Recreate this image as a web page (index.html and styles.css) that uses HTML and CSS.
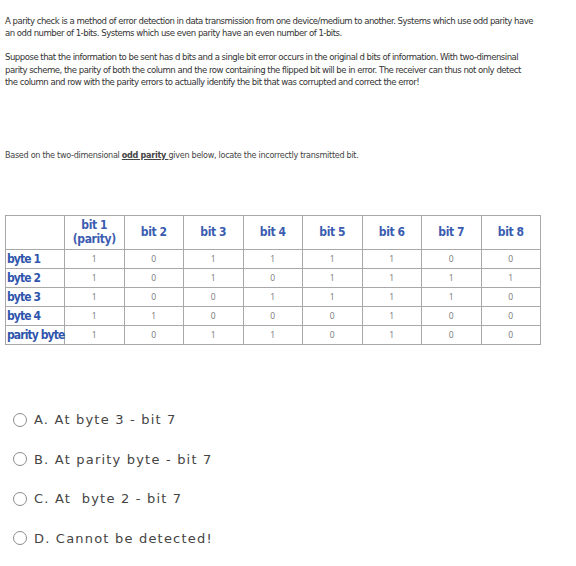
FILE: index.html
```html
<!DOCTYPE html>
<html>
<head>
<meta charset="utf-8">
<link rel="stylesheet" href="styles.css">
</head>
<body>
<div class="page">
  <p class="intro">A parity check is a method of error detection in data transmission from one device/medium to another. Systems which use odd parity have an odd number of 1-bits. Systems which use even parity have an even number of 1-bits.</p>
  <p class="intro intro2">Suppose that the information to be sent has d bits and a single bit error occurs in the original d bits of information. With two-dimensinal parity scheme, the parity of both the column and the row containing the flipped bit will be in error. The receiver can thus not only detect the column and row with the parity errors to actually identify the bit that was corrupted and correct the error!</p>
  <p class="prompt">Based on the two-dimensional <b class="u">odd parity </b>given below, locate the incorrectly transmitted bit.</p>

  <table class="grid">
    <colgroup>
      <col class="c0"><col><col><col><col><col><col><col><col>
    </colgroup>
    <thead>
      <tr>
        <th></th>
        <th>bit 1<br>(parity)</th>
        <th>bit 2</th><th>bit 3</th><th>bit 4</th><th>bit 5</th><th>bit 6</th><th>bit 7</th><th>bit 8</th>
      </tr>
    </thead>
    <tbody>
      <tr><th>byte 1</th><td>1</td><td>0</td><td>1</td><td>1</td><td>1</td><td>1</td><td>0</td><td>0</td></tr>
      <tr><th>byte 2</th><td>1</td><td>0</td><td>1</td><td>0</td><td>1</td><td>1</td><td>1</td><td>1</td></tr>
      <tr><th>byte 3</th><td>1</td><td>0</td><td>0</td><td>1</td><td>1</td><td>1</td><td>1</td><td>0</td></tr>
      <tr><th>byte 4</th><td>1</td><td>1</td><td>0</td><td>0</td><td>0</td><td>1</td><td>0</td><td>0</td></tr>
      <tr><th>parity byte</th><td>1</td><td>0</td><td>1</td><td>1</td><td>0</td><td>1</td><td>0</td><td>0</td></tr>
    </tbody>
  </table>

  <ul class="options">
    <li><span class="radio"></span><span>A. At byte 3 - bit 7</span></li>
    <li><span class="radio"></span><span>B. At parity byte - bit 7</span></li>
    <li><span class="radio"></span><span>C. At&nbsp; byte 2 - bit 7</span></li>
    <li><span class="radio"></span><span>D. Cannot be detected!</span></li>
  </ul>
</div>
</body>
</html>
```

FILE: styles.css
```css
html, body {
  margin: 0;
  padding: 0;
  background: #fff;
}
.page {
  padding: 15px 5px 0 5px;
  font-family: "DejaVu Sans Condensed", "DejaVu Sans", sans-serif;
  color: #333;
}
.intro {
  margin: 0;
  font-size: 9.5px;
  letter-spacing: -0.5px;
  line-height: 11.5px;
  width: 536px;
}
.intro2 {
  margin-top: 13px;
  line-height: 12.5px;
  width: 528px;
}
.prompt {
  margin: 60px 0 0 0;
  font-size: 9px;
  letter-spacing: -0.3px;
  line-height: 12px;
  color: #444;
}
.u {
  text-decoration: underline;
  font-weight: bold;
}
.grid {
  margin-top: 54px;
  border-collapse: collapse;
  table-layout: fixed;
  width: 536px;
  border: 1px solid #8a8a8a;
}
.grid .c0 {
  width: 59px;
}
.grid th, .grid td {
  border: 1px solid #a8a8a8;
  padding: 0;
}
.grid thead th {
  height: 33px;
  color: #3a5cb0;
  font-size: 12px;
  letter-spacing: -0.4px;
  line-height: 14px;
  font-weight: bold;
  text-align: center;
}
.grid tbody th {
  text-align: left;
  color: #2f55ac;
  font-size: 12px;
  letter-spacing: -0.9px;
  font-weight: bold;
  height: 18px;
  padding-left: 1px;
  white-space: nowrap;
}
.grid td {
  text-align: center;
  color: #777;
  font-size: 8.5px;
  font-family: "Open Sans", sans-serif;
  height: 18px;
}
.options {
  list-style: none;
  margin: 65px 0 0 0;
  padding: 0 0 0 8px;
  font-family: "DejaVu Sans", sans-serif;
  font-size: 13px;
  color: #444;
  letter-spacing: 1.2px;
}
.options li {
  display: flex;
  align-items: center;
  gap: 7px;
  height: 20px;
  margin-bottom: 19.5px;
}
.radio {
  width: 12px;
  height: 12px;
  border: 1px solid #8c8c8c;
  border-radius: 50%;
  flex: none;
}
```
